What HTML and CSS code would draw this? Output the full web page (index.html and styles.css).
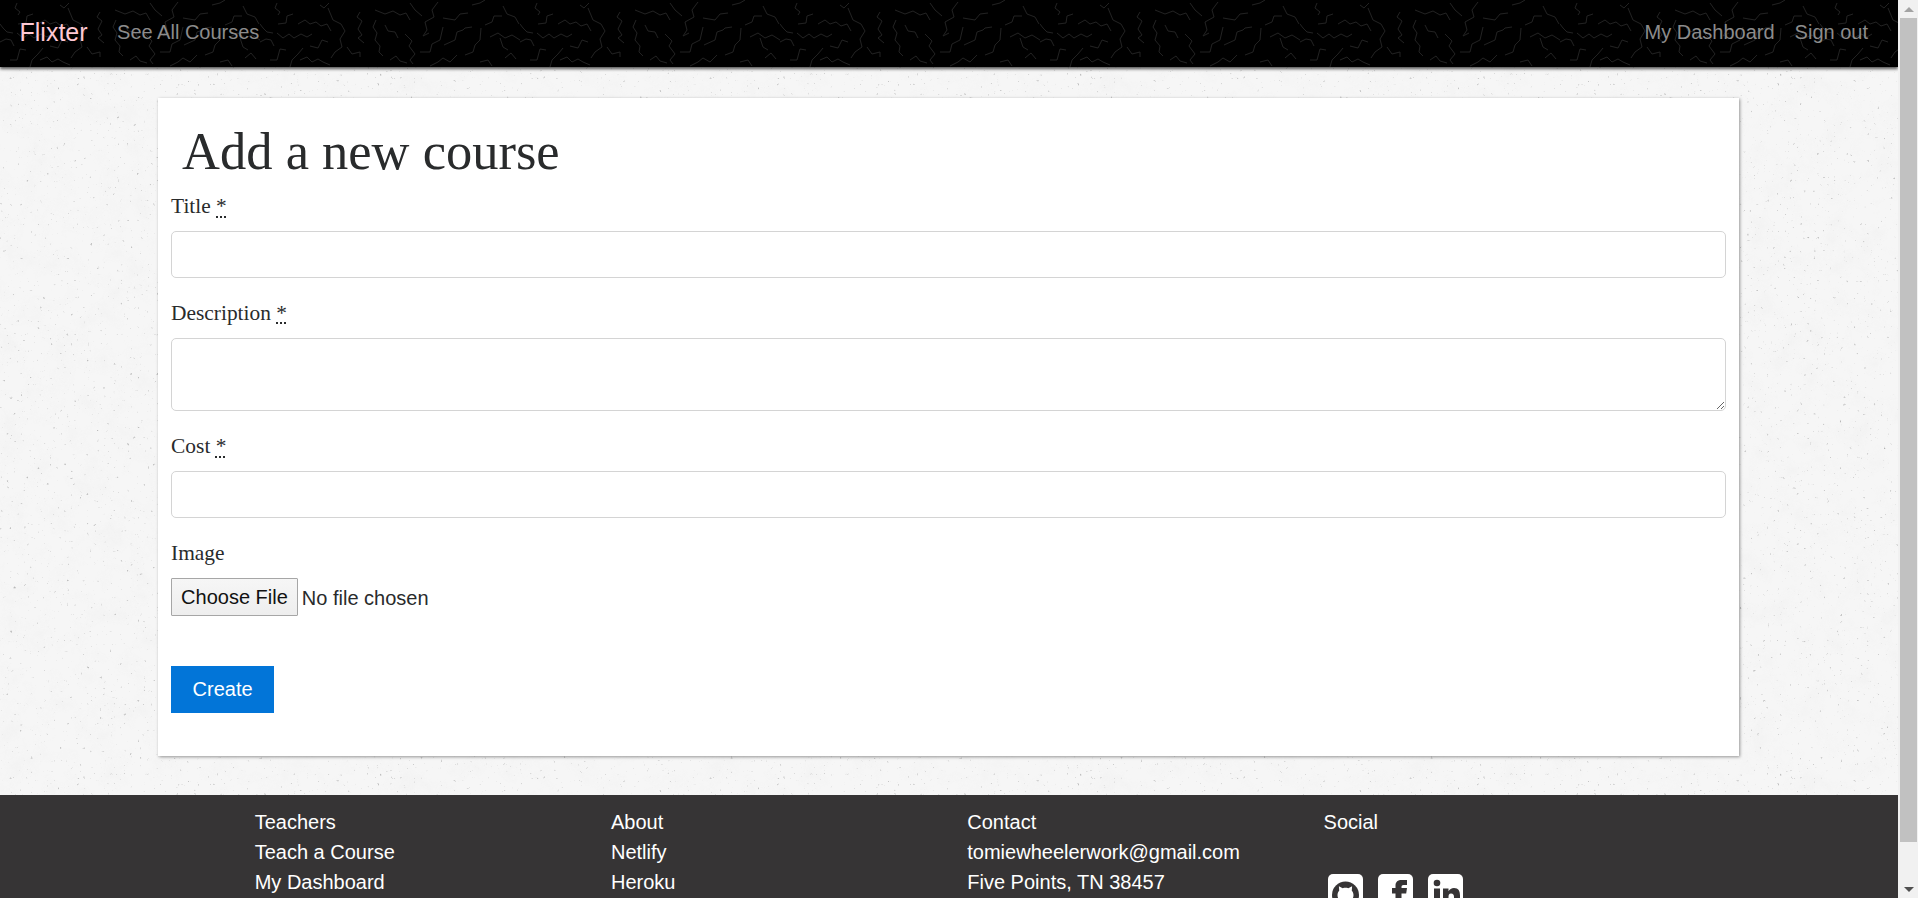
FILE: index.html
```html
<!DOCTYPE html>
<html lang="en">
<head>
<meta charset="utf-8">
<title>Flixter</title>
<link rel="stylesheet" href="styles.css">
</head>
<body>
<div class="page">
  <nav class="navbar">
    <a class="brand" href="#">Flixter</a>
    <a class="nav-link" href="#">See All Courses</a>
    <div class="nav-right">
      <a class="nav-link" href="#">My Dashboard</a>
      <a class="nav-link" href="#">Sign out</a>
    </div>
  </nav>
  <main class="main">
    <section class="card">
      <h1 class="title">Add a new course</h1>
      <form class="form">
        <div class="group">
          <label class="label" for="t">Title <abbr class="req" title="required">*</abbr></label>
          <input class="control" id="t" type="text">
        </div>
        <div class="group">
          <label class="label" for="d">Description <abbr class="req" title="required">*</abbr></label>
          <textarea class="control area" id="d"></textarea>
        </div>
        <div class="group">
          <label class="label" for="c">Cost <abbr class="req" title="required">*</abbr></label>
          <input class="control" id="c" type="text">
        </div>
        <div class="group file-group">
          <label class="label" for="i">Image</label>
          <input class="file" id="i" type="file">
        </div>
        <button class="submit" type="button">Create</button>
      </form>
    </section>
  </main>
  <footer class="footer">
    <div class="col">
      <a href="#">Teachers</a>
      <a href="#">Teach a Course</a>
      <a href="#">My Dashboard</a>
    </div>
    <div class="col">
      <a href="#">About</a>
      <a href="#">Netlify</a>
      <a href="#">Heroku</a>
    </div>
    <div class="col">
      <a href="#">Contact</a>
      <a href="#">tomiewheelerwork@gmail.com</a>
      <a href="#">Five Points, TN 38457</a>
    </div>
    <div class="col">
      <a href="#">Social</a>
      <div class="social">
        <svg class="icon" viewBox="0 0 35 35" aria-label="GitHub"><rect class="sq" width="35" height="35" rx="5"/><circle class="ink" cx="17.5" cy="21" r="13.5"/><path class="sq" d="M9.500 21c0-2 .8-3.200 1.700-4.300l-.3-4.400 3.800 1.900c1.800-.5 3.800-.5 5.600 0l3.800-1.900-.3 4.400c.9 1.100 1.700 2.300 1.700 4.300 0 4.500-2.800 6-6.300 6.400V35h-3V27.400C12.300 27 9.500 25.500 9.500 21z"/></svg>
        <svg class="icon" viewBox="0 0 35 35" aria-label="Facebook"><rect class="sq" width="35" height="35" rx="5"/><path class="ink" d="M17.500 35V19.500H14v-5.500h3.500v-2.500C17.500 7.800 20 6 23.500 6H29v5h-3.500c-1.300 0-2 .7-2 2v1H29l-.8 5.500h-4.700V35z"/></svg>
        <svg class="icon" viewBox="0 0 35 35" aria-label="LinkedIn"><rect class="sq" width="35" height="35" rx="5"/><circle class="ink" cx="9" cy="9" r="3.300"/><path class="ink" d="M6 14.500h6V35H6zM15 14.500h5.500v2.800c1-1.800 3-3.200 5.500-3.200 4.500 0 6 3 6 7.500V35h-6V23c0-2-.8-3.500-3-3.500-2 0-2.500 1.500-2.500 3.500v12h-5.500z"/></svg>
      </div>
    </div>
  </footer>
</div>
<div class="scrollbar" aria-hidden="true">
  <div class="sb-btn"><span class="arrow-up"></span></div>
  <div class="sb-thumb"></div>
  <div class="sb-btn sb-end"><span class="arrow-down"></span></div>
</div>
</body>
</html>
```
FILE: styles.css
```css
html, body {
  margin: 0;
  height: 100%;
}
body {
  display: flex;
  height: 100vh;
  overflow: hidden;
  background: #fff;
  font-family: "Liberation Sans", Arial, sans-serif;
  font-size: 20px;
  line-height: 30px;
  color: #292b2c;
}
a {
  text-decoration: none;
}
.page {
  flex: 1 1 auto;
  min-width: 0;
  height: 100vh;
  overflow: hidden;
  background-color: #f6f6f6;
  background-image: url("data:image/svg+xml,%3Csvg xmlns='http://www.w3.org/2000/svg' width='700' height='700'%3E%3Cfilter id='s' x='0' y='0' width='100%25' height='100%25'%3E%3CfeTurbulence type='fractalNoise' baseFrequency='.3' numOctaves='2' seed='7' stitchTiles='stitch'/%3E%3CfeColorMatrix values='0 0 0 0 .45 0 0 0 0 .45 0 0 0 0 .45 0 0 0 5 -3.650'/%3E%3C/filter%3E%3Cfilter id='m' x='0' y='0' width='100%25' height='100%25'%3E%3CfeTurbulence type='fractalNoise' baseFrequency='.04' numOctaves='4' seed='3' stitchTiles='stitch'/%3E%3CfeColorMatrix values='0 0 0 0 .8 0 0 0 0 .8 0 0 0 0 .8 0 0 0 1.200 -.55'/%3E%3C/filter%3E%3Crect width='700' height='700' filter='url(%23m)' opacity='.4'/%3E%3Crect width='700' height='700' filter='url(%23s)'/%3E%3C/svg%3E");
}
.navbar {
  display: flex;
  align-items: center;
  height: 67px;
  padding: 0 30px 3px 19.500px;
  box-sizing: border-box;
  background-color: #000;
  background-image: url("data:image/svg+xml,%3Csvg xmlns='http://www.w3.org/2000/svg' width='260' height='67'%3E%3Cg fill='none' stroke='%23222' stroke-width='1'%3E%3Cpath d='M17 3l-2 5 5 4-2 3M18 24l8-1 1-7 6-2M38 24l7-4 5 4 6-2 5 4 6-2 4 7M0 24l3 4 4 4 6 1M17 33l6 5 6-4 5 4 7-4 6 3 5-3M0 42l6-3 5 1 3 6M50 46l8 2 4-8 6 2M10 60l7 0 3-11 6 1M30 67l2-7 6-6 5-6M40 60l7-3 5 5 6-3 5 3 7 3M68 8l5 12 8 4 4 7-5 8 2 8-7 5-4 6M87 47l5 7 8-2 0 5M100 12l-3 5 5 4-4 8 4 6-4 3 6 5M116 20l-3 7 4 6-2 7 5 6-1 6 4 4M125 25l3 6 7 1 3 6M145 34l7 7-3 5 6 8-5 6 3 4M115 10l10 4 8-3 7 4 6-2 4 7M150 3l5 7 7 6M178 2l-6 8 2 7-9 5 2 8-4 6 6-3M183 18l12 2 5-6 8-1M184 45l11-5 2-8 6-2 2-2 7-1M160 52l10 0 2-8 8-4 3-13M205 55l8-3 2-7 5-5 1-12M225 25l7-3 2-6 8 0M240 38l3 9 5 3M230 37l8-4 7 5 7-3 8 5M243 6l4 8 8 3 4 7M170 66l8-4 5-4 7 4 7-7M220 62l8-2 4 6M212 5l8-2 5-3M60 5l4 3 5-5M130 60l6-4 4 5 7 2M245 58l6-5 5 6'/%3E%3C/g%3E%3C/svg%3E");
  box-shadow: 0 2px 3px rgba(0, 0, 0, 0.65);
}
.brand {
  font-size: 25px;
  color: #ffc8d4;
  margin-right: 29.500px;
}
.nav-link {
  color: #8c8c8c;
}
.nav-right {
  margin-left: auto;
  display: flex;
  gap: 20px;
}
.main {
  padding: 31px 0 39px;
}
.card {
  width: 83.300%;
  margin-left: 8.330%;
  box-sizing: border-box;
  height: 658px;
  padding: 23px 13px 0;
  background: #fff;
  box-shadow: 1px 1px 3px rgba(0, 0, 0, 0.4);
}
.title {
  margin: 0 0 10px;
  padding-left: 11px;
  font-family: "Liberation Serif", "Times New Roman", serif;
  font-size: 52.500px;
  font-weight: 400;
  line-height: 60px;
}
.group {
  margin-bottom: 20px;
}
.label {
  display: block;
  margin-bottom: 10px;
  font-family: "Liberation Serif", "Times New Roman", serif;
  font-size: 21.400px;
  line-height: 30px;
}
.req {
  text-decoration: underline dotted 2px;
  text-underline-offset: 3px;
}
.control {
  display: block;
  width: 100%;
  height: 46.500px;
  box-sizing: border-box;
  border: 1px solid #d4d4d4;
  border-radius: 5px;
  background: #fff;
  font: inherit;
  padding: 8px 15px;
  outline: none;
}
.area {
  height: 73.500px;
  resize: vertical;
}
.file-group {
  margin-bottom: 50px;
}
.file {
  display: block;
  height: 38px;
  font-family: "Liberation Sans", Arial, sans-serif;
  font-size: 20px;
  color: #292b2c;
}
.file::file-selector-button {
  height: 38px;
  margin: 0 4px 0 0;
  padding: 2px 9px 0;
  border: 1px solid #a6a6a6;
  border-radius: 1px;
  background: linear-gradient(#f6f6f6, #eeeeee);
  color: #111;
  font: inherit;
}
.submit {
  display: block;
  width: 103px;
  height: 47px;
  padding: 0;
  border: 0;
  background: #0275d8;
  color: #fff;
  font: inherit;
}
.footer {
  display: flex;
  padding: 12px 0 0 254.700px;
  background-color: #363435;
}
.col {
  flex: 0 0 356.300px;
  display: flex;
  flex-direction: column;
}
.col a {
  color: #fff;
}
.social {
  display: flex;
  gap: 15px;
  margin: 37px 0 0 4px;
  height: 50px;
}
.icon {
  flex: 0 0 35px;
  width: 35px;
  height: 35px;
  display: block;
}
.sq {
  fill: #fff;
}
.ink {
  fill: #363435;
}
.scrollbar {
  flex: 0 0 20px;
  display: flex;
  flex-direction: column;
  height: 100vh;
  background: #f1f1f1;
}
.sb-btn {
  flex: 0 0 18px;
  display: flex;
  justify-content: center;
  align-items: center;
  padding-left: 1px;
}
.sb-end {
  margin-top: auto;
}
.sb-thumb {
  height: 824px;
  margin: 0 1px 0 2px;
  background: #c1c1c1;
}
.arrow-up {
  border: 5px solid transparent;
  border-top: 0;
  border-bottom: 5px solid #a3a3a3;
}
.arrow-down {
  border: 5px solid transparent;
  border-bottom: 0;
  border-top: 5px solid #505050;
}
```
